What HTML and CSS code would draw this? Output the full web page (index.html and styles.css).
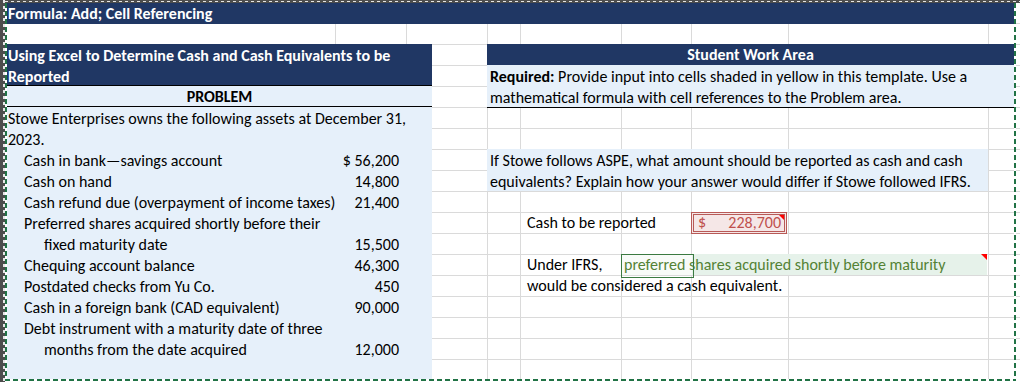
FILE: index.html
```html
<!DOCTYPE html>
<html lang="en">
<head>
<meta charset="utf-8">
<title>Formula: Add; Cell Referencing</title>
<link rel="stylesheet" href="styles.css">
</head>
<body>
<div class="screen">
  <div class="gutter"></div>
  <div class="main">
    <div class="top-strip"></div>
    <div class="middle">
      <div class="ants-v"></div>
      <div class="sheet">
        <div class="title">Formula: Add; Cell Referencing</div>
        <section class="problem">
          <div class="problem-head">Using Excel to Determine Cash and Cash Equivalents to be<br>Reported</div>
          <div class="problem-label">PROBLEM</div>
          <p class="intro">Stowe Enterprises owns the following assets at December 31,<br>2023.</p>
          <ul class="assets">
            <li><span>Cash in bank—savings account</span><span class="amt">$ 56,200</span></li>
            <li><span>Cash on hand</span><span class="amt">14,800</span></li>
            <li><span>Cash refund due (overpayment of income taxes)</span><span class="amt">21,400</span></li>
            <li><span>Preferred shares acquired shortly before their</span></li>
            <li class="cont"><span>fixed maturity date</span><span class="amt">15,500</span></li>
            <li><span>Chequing account balance</span><span class="amt">46,300</span></li>
            <li><span>Postdated checks from Yu Co.</span><span class="amt">450</span></li>
            <li><span>Cash in a foreign bank (CAD equivalent)</span><span class="amt">90,000</span></li>
            <li><span>Debt instrument with a maturity date of three</span></li>
            <li class="cont"><span>months from the date acquired</span><span class="amt">12,000</span></li>
          </ul>
        </section>
        <div class="work-head">Student Work Area</div>
        <div class="required"><b>Required:</b> Provide input into cells shaded in yellow in this template. Use a<br>mathematical formula with cell references to the Problem area.</div>
        <div class="question">If Stowe follows ASPE, what amount should be reported as cash and cash<br>equivalents? Explain how your answer would differ if Stowe followed IFRS.</div>
        <div class="cash-label">Cash to be reported</div>
        <div class="cash-cell"><span>$</span><span>228,700</span></div>
        <div class="ifrs-label">Under IFRS,</div>
        <div class="ifrs-cell">preferred shares acquired shortly before maturity</div>
        <div class="ifrs-note">would be considered a cash equivalent.</div>
      </div>
      <div class="ants-v"></div>
      <div class="outside"></div>
    </div>
    <div class="ants-h"></div>
  </div>
</div>
</body>
</html>
```

FILE: styles.css
```css
* { box-sizing: border-box; }

html, body {
  margin: 0;
  padding: 0;
  background: #fff;
}

body {
  font-family: Carlito, Lato, "Liberation Sans", sans-serif;
  font-size: 16px;
  color: #000;
}

.screen {
  display: flex;
  width: 1020px;
  height: 382px;
  overflow: hidden;
}

.gutter {
  width: 5px;
  flex: none;
  background:
    linear-gradient(to right, #4d4d4d 0 3px, transparent 3px),
    repeating-linear-gradient(to bottom, #e6e6e6 0 3px, #4d4d4d 3px 6px);
}

.main {
  display: flex;
  flex-direction: column;
  width: 1015px;
}

.top-strip {
  height: 3px;
  flex: none;
  background:
    linear-gradient(to bottom, #4d4d4d 0 1px, transparent 1px 2px, #4d4d4d 2px),
    repeating-linear-gradient(to right, #e6e6e6 0 3px, #4d4d4d 3px 6px);
}

.middle {
  display: flex;
  height: 376px;
  flex: none;
}

.ants-v {
  width: 2px;
  flex: none;
  background: repeating-linear-gradient(to bottom, #217346 0 5px, transparent 5px 8px);
}

.ants-h {
  width: 1011px;
  height: 2px;
  flex: none;
  background: repeating-linear-gradient(to right, #217346 0 5px, transparent 5px 8px);
}

.outside {
  width: 4px;
  flex: none;
  background: linear-gradient(to bottom, #dadada 0 1px, transparent 1px) 0 62px / 100% 21px repeat-y, #fff;
}

.sheet {
  width: 1007px;
  flex: none;
  display: grid;
  grid-template-columns: 328px 71px 26px 55px 33px 101px 70px 97px 200px 26px;
  grid-template-rows: 21px 20px repeat(15, 21px) 20px;
  line-height: 21px;
  white-space: nowrap;
  background:
    linear-gradient(#dadada, #dadada) 328px 0 / 1px 100% no-repeat,
    linear-gradient(#dadada, #dadada) 399px 0 / 1px 100% no-repeat,
    linear-gradient(#dadada, #dadada) 480px 0 / 1px 100% no-repeat,
    linear-gradient(#dadada, #dadada) 513px 0 / 1px 100% no-repeat,
    linear-gradient(#dadada, #dadada) 614px 0 / 1px 100% no-repeat,
    linear-gradient(#dadada, #dadada) 684px 0 / 1px 100% no-repeat,
    linear-gradient(#dadada, #dadada) 781px 0 / 1px 100% no-repeat,
    linear-gradient(#dadada, #dadada) 981px 0 / 1px 100% no-repeat,
    linear-gradient(to bottom, #dadada 0 1px, transparent 1px) 0 62px / 100% 21px repeat-y,
    #fff;
}

.title {
  grid-column: 1 / -1;
  grid-row: 1;
  background: #203764;
  color: #fff;
  font-weight: 700;
  padding-left: 1px;
}

/* Problem panel */
.problem {
  grid-column: 1 / 4;
  grid-row: 3 / -1;
  background: #e6f0fa;
  display: flex;
  flex-direction: column;
}

.problem-head {
  height: 42px;
  background: #203764;
  color: #fff;
  font-weight: 700;
  padding: 1px 0 0 1px;
  border-bottom: 1px solid #000;
  line-height: 21px;
  overflow: hidden;
}

.problem-label {
  height: 21px;
  line-height: 21px;
  text-align: center;
  font-weight: 700;
  border-bottom: 1px solid #000;
  overflow: hidden;
}

.intro {
  margin: 0;
  height: 42px;
  padding: 1px 0 0 1px;
}

.assets {
  list-style: none;
  margin: 0;
  padding: 0;
}

.assets li {
  height: 21px;
  display: flex;
  justify-content: space-between;
  padding: 1px 33px 0 17px;
}

.assets li.cont {
  padding-left: 37px;
}

/* Student work area */
.work-head {
  grid-column: 5 / -1;
  grid-row: 3;
  background: #203764;
  color: #fff;
  font-weight: 700;
  text-align: center;
  padding-top: 1px;
  line-height: 20px;
}

.required {
  grid-column: 5 / -1;
  grid-row: 4 / 6;
  background: #e6f0fa;
  padding: 1px 0 0 3px;
  box-shadow: 0 1px 0 #000;
  position: relative;
}

.question {
  grid-column: 5 / 10;
  grid-row: 8 / 10;
  background: #e6f0fa;
  padding: 1px 0 0 3px;
}

.cash-label,
.ifrs-label,
.ifrs-note {
  grid-column: 6;
  padding: 1px 0 0 7px;
  line-height: 20px;
}

.cash-label { grid-row: 11; }
.ifrs-label { grid-row: 13; }
.ifrs-note { grid-row: 14; }

.cash-cell {
  grid-column: 8;
  grid-row: 11;
  position: relative;
  height: 22px;
  margin-right: 1px;
  border: 3px double #b85a57;
  background: #f5e7e7;
  color: #c0504d;
  display: flex;
  justify-content: space-between;
  padding: 0 3px 0 4px;
  line-height: 16px;
}

.cash-cell::after {
  content: "";
  position: absolute;
  top: 0;
  right: 0;
  border-left: 5px solid transparent;
  border-top: 5px solid #ff0000;
}

.ifrs-cell {
  grid-column: 7 / 10;
  grid-row: 13;
  position: relative;
  margin-right: 1px;
  background: linear-gradient(to right, #f8fbf8 0 71px, #e6f2ea 71px);
  color: #548235;
  padding: 1px 0 0 3px;
  line-height: 20px;
}

.ifrs-cell::before {
  content: "";
  position: absolute;
  left: 0;
  top: 0;
  width: 71px;
  height: 22px;
  border: 1px solid #3b7a41;
}

.ifrs-cell::after {
  content: "";
  position: absolute;
  top: 0;
  right: 0;
  border-left: 6px solid transparent;
  border-top: 6px solid #ff0000;
}
```
